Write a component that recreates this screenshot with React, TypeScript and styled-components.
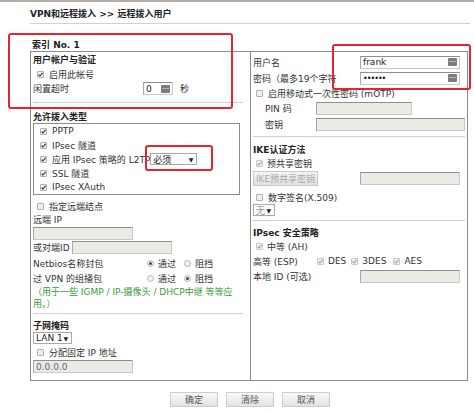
import styled, { createGlobalStyle } from 'styled-components';

const GlobalStyle = createGlobalStyle`
  body {
    margin: 0;
    background: #fff;
    font-family: "DejaVu Sans", "Noto Sans CJK SC", sans-serif;
    font-size: 9px;
    color: #333;
  }
`;

const Page = styled.div`
  position: relative;
  width: 474px;
  height: 413px;
  box-sizing: border-box;
  border-top: 2px solid #b9aca6;
  overflow: hidden;
`;

const Breadcrumb = styled.div`
  margin-left: 30px;
  width: 440px;
  padding: 6px 0 3px;
  line-height: 12px;
  font-weight: bold;
  color: #222;
  border-bottom: 1px solid #d2d2d2;
`;

const IndexTitle = styled.div`
  margin: 15px 0 0 32px;
  line-height: 12px;
  font-weight: bold;
  color: #222;
`;

const Table = styled.div`
  margin-left: 30px;
  width: 438px;
  height: 330px;
  box-sizing: border-box;
  display: grid;
  grid-template-columns: 220px 1fr;
  border: 1px solid #8c8c8c;
`;

const LeftCol = styled.div`
  border-right: 1px solid #8c8c8c;
  padding-left: 2px;
  padding-right: 7px;
`;

const RightCol = styled.div`
  padding-left: 2px;
  padding-right: 2px;
`;

const Row = styled.div<{ $h?: number; $mt?: number; $indent?: number }>`
  display: flex;
  align-items: center;
  height: ${(p) => p.$h ?? 14}px;
  margin-top: ${(p) => p.$mt ?? 0}px;
  padding-left: ${(p) => p.$indent ?? 0}px;
  white-space: nowrap;
`;

const Heading = styled(Row)`
  font-weight: bold;
  color: #222;
`;

const Sep = styled.div<{ $mt?: number; $mb?: number }>`
  height: 1px;
  background: #cfcfcf;
  margin-top: ${(p) => p.$mt ?? 6}px;
  margin-bottom: ${(p) => p.$mb ?? 6}px;
`;

const Label = styled.span<{ $w: number }>`
  display: inline-block;
  width: ${(p) => p.$w}px;
  overflow: hidden;
`;

const TypeBox = styled.div`
  width: 207px;
  box-sizing: border-box;
  border: 1px solid #8c8c8c;
`;

const Field = styled.div<{ $w: number; $gray?: boolean; $ml?: number }>`
  display: flex;
  align-items: center;
  justify-content: space-between;
  width: ${(p) => p.$w}px;
  height: 13px;
  box-sizing: border-box;
  margin-left: ${(p) => p.$ml ?? 0}px;
  padding: 0 2px;
  border: 1px solid #c8c8c8;
  border-top-color: #8e8e8e;
  border-left-color: #a8a8a8;
  background: ${(p) => (p.$gray ? '#ebebe6' : '#fff')};
  color: #222;
  font-size: 9px;
`;

const BlockField = styled(Field)`
  margin-top: 1px;
  color: #666;
`;

const Dots = styled.span`
  font-size: 8px;
  letter-spacing: -1px;
  color: #111;
`;

const SelectBox = styled.div<{ $w: number; $ml?: number }>`
  display: flex;
  align-items: center;
  justify-content: space-between;
  width: ${(p) => p.$w}px;
  height: 12px;
  box-sizing: border-box;
  margin-left: ${(p) => p.$ml ?? 0}px;
  padding: 0 3px 0 2px;
  border: 1px solid #a9a9a9;
  background: #fff;
  color: #222;
`;

const Arrow = styled.span`
  font-size: 6px;
  color: #222;
`;

const Box = styled.span<{ $dim?: boolean }>`
  display: inline-flex;
  align-items: center;
  justify-content: center;
  width: 7px;
  height: 7px;
  box-sizing: border-box;
  border: 1px solid ${(p) => (p.$dim ? '#cacaca' : '#b0b0b0')};
  border-radius: 1px;
  background: #f0f0f0;
  flex-shrink: 0;
`;

const Opt = styled.span<{ $ml?: number; $mr?: number; $dim?: boolean }>`
  display: inline-flex;
  align-items: center;
  margin-left: ${(p) => p.$ml ?? 0}px;
  margin-right: ${(p) => p.$mr ?? 0}px;
  gap: ${(p) => (p.$dim ? 4 : 5)}px;
`;

const Dot = styled.span<{ $on?: boolean }>`
  position: relative;
  display: inline-block;
  width: 7px;
  height: 7px;
  box-sizing: border-box;
  border: 1px solid #b4b4b4;
  border-radius: 50%;
  background: #f2f2f2;
  &::after {
    content: '';
    display: ${(p) => (p.$on ? 'block' : 'none')};
    position: absolute;
    left: 1px;
    top: 1px;
    width: 3px;
    height: 3px;
    border-radius: 50%;
    background: #444;
  }
`;

const Unit = styled.span`
  margin-left: 7px;
`;

const Note = styled.div`
  color: #3a9a3a;
  line-height: 12px;
  margin-top: 1px;
`;

const GrayButton = styled.div`
  display: flex;
  align-items: center;
  justify-content: center;
  width: 65px;
  height: 15px;
  box-sizing: border-box;
  border: 1px solid #c9c9c9;
  background: linear-gradient(#f4f4f4, #e0e0e0);
  color: #a8a8a8;
`;

const Muted = styled.span`
  color: #999;
`;

const Buttons = styled.div`
  display: flex;
  gap: 8px;
  margin: 11px 0 0 170px;
`;

const Btn = styled.div`
  display: flex;
  align-items: center;
  justify-content: center;
  width: 48px;
  height: 15px;
  box-sizing: border-box;
  border: 1px solid #cdcdcd;
  background: linear-gradient(#f8f8f8, #e3e3e3);
  color: #555;
`;

const Mark = styled.div<{ $x: number; $y: number; $w: number; $h: number }>`
  position: absolute;
  left: ${(p) => p.$x}px;
  top: ${(p) => p.$y}px;
  width: ${(p) => p.$w}px;
  height: ${(p) => p.$h}px;
  box-sizing: border-box;
  border: 2px solid #e4262c;
  border-radius: 3px;
  pointer-events: none;
`;

function Check({ on, dim }: { on?: boolean; dim?: boolean }) {
  return (
    <Box $dim={dim}>
      {on && (
        <svg width="5" height="5" viewBox="0 0 5 5">
          <path
            d="M0.5 2.6 L1.9 4 L4.6 0.8"
            fill="none"
            stroke={dim ? '#a0a0a0' : '#333'}
            strokeWidth="1.1"
          />
        </svg>
      )}
    </Box>
  );
}

function Key() {
  return (
    <svg width="9" height="8" viewBox="0 0 9 8">
      <rect x="0" y="0" width="9" height="8" rx="1" fill="#7c7c7c" />
      <rect x="1" y="3" width="7" height="1" fill="#b4b4b4" />
    </svg>
  );
}

function CheckRow({
  text,
  on,
  dim,
  ml,
  mt,
}: {
  text: string;
  on?: boolean;
  dim?: boolean;
  ml: number;
  mt?: number;
}) {
  return (
    <Row $mt={mt}>
      <Opt $ml={ml} $dim={dim}>
        <Check on={on} dim={dim} />
        {text}
      </Opt>
    </Row>
  );
}

export default function App() {
  return (
    <>
      <GlobalStyle />
      <Page>
        <Breadcrumb>VPN和远程拨入 &gt;&gt; 远程拨入用户</Breadcrumb>
        <IndexTitle>索引 No. 1</IndexTitle>
        <Table>
          <LeftCol>
            <Heading $h={15}>用户帐户与验证</Heading>
            <CheckRow text="启用此帐号" on ml={4} />
            <Row $h={15}>
              <Label $w={110}>闲置超时</Label>
              <Field $w={30}>
                0<Key />
              </Field>
              <Unit>秒</Unit>
            </Row>
            <Sep />
            <Heading>允许拨入类型</Heading>
            <TypeBox>
              <CheckRow text="PPTP" on ml={6} />
              <CheckRow text="IPsec 隧道" on ml={6} />
              <Row>
                <Opt $ml={6}>
                  <Check on />
                  应用 IPsec 策略的 L2TP
                </Opt>
                <SelectBox $w={47} $ml={0}>
                  必须<Arrow>▼</Arrow>
                </SelectBox>
              </Row>
              <CheckRow text="SSL 隧道" on ml={6} />
              <CheckRow text="IPsec XAuth" on ml={6} />
            </TypeBox>
            <CheckRow text="指定远端结点" ml={4} mt={4} />
            <Row $h={13}>远端 IP</Row>
            <BlockField $w={100} $gray />
            <Row $h={15}>
              <Label $w={39}>或对端ID</Label>
              <Field $w={100} $gray />
            </Row>
            <Row $mt={1}>
              <Label $w={114}>Netbios名称封包</Label>
              <Opt $mr={8} $dim>
                <Dot $on />
                通过
              </Opt>
              <Opt $dim>
                <Dot />
                阻挡
              </Opt>
            </Row>
            <Row $mt={1}>
              <Label $w={114}>过 VPN 的组播包</Label>
              <Opt $mr={8} $dim>
                <Dot />
                通过
              </Opt>
              <Opt $dim>
                <Dot $on />
                阻挡
              </Opt>
            </Row>
            <Note>
              （用于一些 IGMP / IP-摄像头 / DHCP中继 等等应
              <br />
              用。）
            </Note>
            <Sep $mt={3} $mb={4} />
            <Heading>子网掩码</Heading>
            <SelectBox $w={39}>
              LAN 1<Arrow>▼</Arrow>
            </SelectBox>
            <CheckRow text="分配固定 IP 地址" ml={4} mt={1} />
            <BlockField $w={100} $gray>
              0.0.0.0
            </BlockField>
          </LeftCol>
          <RightCol>
            <Row $mt={3}>
              <Label $w={107}>用户名</Label>
              <Field $w={100}>
                frank
                <Key />
              </Field>
            </Row>
            <Row $mt={2}>
              <Label $w={107}>密码（最多19个字符</Label>
              <Field $w={100}>
                <Dots>••••••</Dots>
                <Key />
              </Field>
            </Row>
            <CheckRow text="启用移动式一次性密码 (mOTP)" ml={3} mt={1} />
            <Row $mt={1} $indent={12}>
              <Label $w={51}>PIN 码</Label>
              <Field $w={96} $gray />
            </Row>
            <Row $mt={2} $indent={12}>
              <Label $w={51}>密钥</Label>
              <Field $w={149} $gray />
            </Row>
            <Sep $mt={5} $mb={5} />
            <Heading>IKE认证方法</Heading>
            <CheckRow text="预共享密钥" on dim ml={3} />
            <Row $h={15} $mt={1}>
              <GrayButton>IKE预共享密钥</GrayButton>
              <Field $w={100} $gray $ml={42} />
            </Row>
            <CheckRow text="数字签名(X.509)" ml={3} mt={4} />
            <SelectBox $w={22}>
              <Muted>无</Muted>
              <Arrow>▼</Arrow>
            </SelectBox>
            <Sep $mt={4} $mb={4} />
            <Heading>IPsec 安全策略</Heading>
            <CheckRow text="中等 (AH)" on dim ml={3} />
            <Row $mt={1}>
              <Label $w={64}>高等 (ESP)</Label>
              <Opt $mr={5} $dim>
                <Check on dim />
                DES
              </Opt>
              <Opt $mr={7} $dim>
                <Check on dim />
                3DES
              </Opt>
              <Opt $dim>
                <Check on dim />
                AES
              </Opt>
            </Row>
            <Row $mt={1}>
              <Label $w={107}>本地 ID (可选)</Label>
              <Field $w={100} $gray />
            </Row>
          </RightCol>
        </Table>
        <Buttons>
          <Btn>确定</Btn>
          <Btn>清除</Btn>
          <Btn>取消</Btn>
        </Buttons>
        <Mark $x={8} $y={31} $w={225} $h={76} />
        <Mark $x={332} $y={42} $w={139} $h={46} />
        <Mark $x={145} $y={143} $w={68} $h={26} />
      </Page>
    </>
  );
}
